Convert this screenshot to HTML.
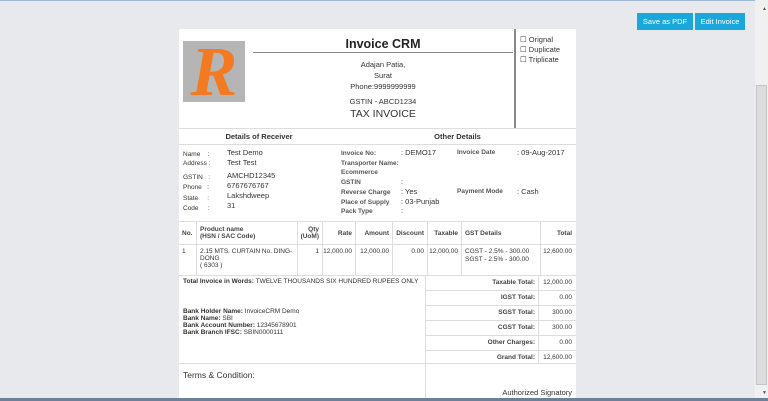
<!DOCTYPE html>
<html><head><meta charset="utf-8"><style>
*{margin:0;padding:0;box-sizing:border-box}
body{width:768px;height:401px;background:#e8e9ed;font-family:"Liberation Sans",sans-serif;position:relative;overflow:hidden;color:#333}
.a{position:absolute;white-space:nowrap}
.s{font-size:6.5px}
.m{font-size:7.5px}
.b{font-weight:bold}
.hl{position:absolute;height:1px;background:#ddd}
.vl{position:absolute;width:1px;background:#ddd}
.r{text-align:right}
</style></head><body>
<div class="a" style="left:0;top:0;width:768px;height:1px;background:#9fb8d6"></div>
<div class="a" style="left:0;top:398px;width:768px;height:3px;background:#6d7f99"></div>
<div class="a" style="left:755px;top:0;width:13px;height:398px;background:#f0f0f0"></div>
<div class="a" style="left:762px;top:6px;font-size:5px;color:#555">▲</div>
<div class="a" style="left:762px;top:390px;font-size:5px;color:#555">▼</div>
<div class="a" style="left:756px;top:85px;width:11px;height:300px;background:#dcdcdc;border:1px solid #c4c4c4"></div>
<div class="a" style="left:637px;top:13px;width:56px;height:17px;background:#1aa8dc;color:#fff;font-size:7.5px;text-align:center;line-height:17px">Save as PDF</div>
<div class="a" style="left:695px;top:13px;width:50px;height:17px;background:#1aa8dc;color:#fff;font-size:7.5px;text-align:center;line-height:17px">Edit Invoice</div>

<div class="a" style="left:179px;top:29px;width:397px;height:369px;background:#fff"></div>
<div class="a" style="left:183px;top:41px;width:62px;height:61px;background:#b5b5b5;overflow:hidden"><div style="color:#f37a20;font-family:'Liberation Serif',serif;font-style:italic;font-size:70px;line-height:61px;text-align:center;margin-top:1px;font-weight:bold">R</div></div>
<div class="a" style="left:253px;top:52px;width:260px;height:1px;background:#888"></div>
<div class="a" style="left:514px;top:29px;width:2px;height:99px;background:#888"></div>
<div class="a b" style="left:253px;top:37px;width:260px;text-align:center;font-size:12.5px;color:#222">Invoice CRM</div>
<div class="a m" style="left:253px;top:60px;width:260px;text-align:center">Adajan Patia,</div>
<div class="a m" style="left:253px;top:71px;width:260px;text-align:center">Surat</div>
<div class="a m" style="left:253px;top:82px;width:260px;text-align:center">Phone:9999999999</div>
<div class="a m" style="left:253px;top:97px;width:260px;text-align:center">GSTIN - ABCD1234</div>
<div class="a" style="left:253px;top:108px;width:260px;text-align:center;font-size:10.5px">TAX INVOICE</div>
<div class="a m" style="left:520px;top:35px;line-height:10px">☐ Orignal<br>☐ Duplicate<br>☐ Triplicate</div>

<div class="hl" style="left:179px;top:128px;width:397px"></div>
<div class="a m b" style="left:179px;top:132px;width:160px;text-align:center">Details of Receiver</div>
<div class="a m b" style="left:380px;top:132px;width:155px;text-align:center">Other Details</div>
<div class="hl" style="left:179px;top:144px;width:397px"></div>

<div class="a s" style="left:183px;top:150px;line-height:9px">Name &nbsp;&nbsp;&nbsp;:<br>Address :</div>
<div class="a m" style="left:227px;top:148px;line-height:9.5px">Test Demo<br>Test Test</div>
<div class="a s" style="left:183px;top:173px;line-height:10.3px">GSTIN &nbsp;&nbsp;:<br>Phone &nbsp;&nbsp;:<br>State &nbsp;&nbsp;&nbsp;&nbsp;:<br>Code &nbsp;&nbsp;&nbsp;&nbsp;:</div>
<div class="a m" style="left:227px;top:171px;line-height:10px">AMCHD12345<br>6767676767<br>Lakshdweep<br>31</div>
<div class="a s b" style="left:341px;top:149px;line-height:9.7px;color:#555">Invoice No:<br>Transporter Name:<br>Ecommerce<br>GSTIN<br>Reverse Charge<br>Place of Supply<br>Pack Type</div>
<div class="a m" style="left:401px;top:148px;line-height:9.7px">: DEMO17<br><br><br>:<br>: Yes<br>: 03-Punjab<br>:</div>
<div class="a s b" style="left:457px;top:149px;color:#555">Invoice Date</div>
<div class="a m" style="left:517px;top:148px">: 09-Aug-2017</div>
<div class="a s b" style="left:457px;top:188px;color:#555">Payment Mode</div>
<div class="a m" style="left:517px;top:187px">: Cash</div>

<div class="hl" style="left:179px;top:221px;width:397px"></div>
<div class="hl" style="left:179px;top:244px;width:397px"></div>
<div class="hl" style="left:179px;top:275px;width:397px"></div>
<div class="vl" style="left:196px;top:221px;height:54px"></div>
<div class="vl" style="left:297px;top:221px;height:54px"></div>
<div class="vl" style="left:322px;top:221px;height:54px"></div>
<div class="vl" style="left:355px;top:221px;height:54px"></div>
<div class="vl" style="left:392px;top:221px;height:54px"></div>
<div class="vl" style="left:427px;top:221px;height:54px"></div>
<div class="vl" style="left:461px;top:221px;height:54px"></div>
<div class="vl" style="left:540px;top:221px;height:54px"></div>
<div class="a s b" style="left:182px;top:230px;color:#444">No.</div>
<div class="a s b" style="left:200px;top:226px;line-height:7px;color:#444">Product name<br>(HSN / SAC Code)</div>
<div class="a s b r" style="left:297px;top:226px;width:22px;line-height:7px;color:#444">Qty<br>(UoM)</div>
<div class="a s b r" style="left:322px;top:230px;width:30px;color:#444">Rate</div>
<div class="a s b r" style="left:355px;top:230px;width:34px;color:#444">Amount</div>
<div class="a s b r" style="left:392px;top:230px;width:32px;color:#444">Discount</div>
<div class="a s b r" style="left:427px;top:230px;width:31px;color:#444">Taxable</div>
<div class="a s b" style="left:465px;top:230px;color:#444">GST Details</div>
<div class="a s b r" style="left:540px;top:230px;width:32px;color:#444">Total</div>
<div class="a s" style="left:182px;top:248px">1</div>
<div class="a s" style="left:200px;top:248px;line-height:7px">2.15 MTS. CURTAIN No. DING-<br>DONG<br>( 6303 )</div>
<div class="a s r" style="left:297px;top:248px;width:22px">1</div>
<div class="a s r" style="left:322px;top:248px;width:30px">12,000.00</div>
<div class="a s r" style="left:355px;top:248px;width:34px">12,000.00</div>
<div class="a s r" style="left:392px;top:248px;width:32px">0.00</div>
<div class="a s r" style="left:427px;top:248px;width:31px">12,000.00</div>
<div class="a s" style="left:465px;top:248px;line-height:8px">CGST - 2.5% - 300.00<br>SGST - 2.5% - 300.00</div>
<div class="a s r" style="left:540px;top:248px;width:32px">12,600.00</div>

<div class="a s" style="left:183px;top:278px"><b>Total Invoice in Words:</b> TWELVE THOUSANDS SIX HUNDRED RUPEES ONLY</div>
<div class="vl" style="left:425px;top:275px;height:123px"></div>
<div class="vl" style="left:538px;top:275px;height:88px"></div>
<div class="hl" style="left:425px;top:290px;width:151px"></div>
<div class="hl" style="left:425px;top:305px;width:151px"></div>
<div class="hl" style="left:425px;top:320px;width:151px"></div>
<div class="hl" style="left:425px;top:335px;width:151px"></div>
<div class="hl" style="left:425px;top:350px;width:151px"></div>
<div class="hl" style="left:179px;top:363px;width:397px"></div>
<div class="a s b r" style="left:425px;top:275px;width:110px;line-height:15px;color:#444">Taxable Total:<br>IGST Total:<br>SGST Total:<br>CGST Total:<br>Other Charges:<br>Grand Total:</div>
<div class="a s r" style="left:538px;top:275px;width:34px;line-height:15px">12,000.00<br>0.00<br>300.00<br>300.00<br>0.00<br>12,600.00</div>
<div class="a s" style="left:183px;top:308px;line-height:7px"><b>Bank Holder Name:</b> InvoiceCRM Demo<br><b>Bank Name:</b> SBI<br><b>Bank Account Number:</b> 12345678901<br><b>Bank Branch IFSC:</b> SBIN0000111</div>
<div class="a" style="left:183px;top:370px;font-size:8.5px">Terms &amp; Condition:</div>
<div class="a m r" style="left:425px;top:388px;width:147px">Authorized Signatory</div>
</body></html>
